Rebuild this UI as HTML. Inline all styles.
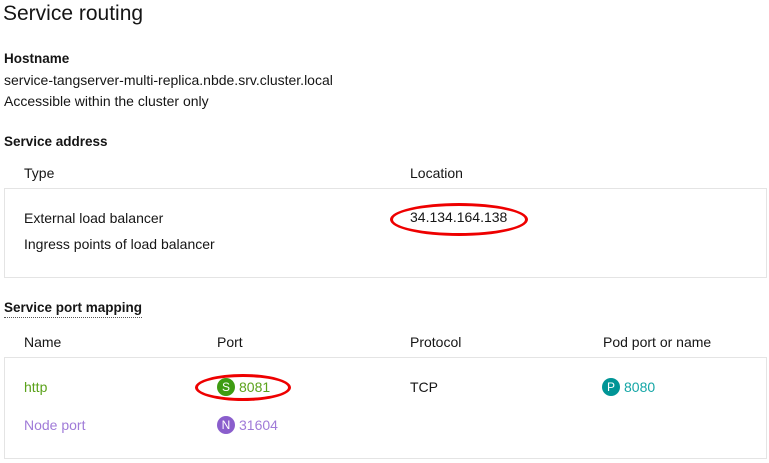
<!DOCTYPE html>
<html><head><style>
body{margin:0;width:769px;height:463px;background:#fff;font-family:"Liberation Sans",sans-serif;color:#151515;position:relative;overflow:hidden}
div,span{position:absolute;white-space:nowrap}
.t{font-size:14px}
.b{font-size:13.5px;font-weight:bold}
.box{border:1px solid #e4e4e4;left:4px;width:761px}
.ic{width:18px;height:18px;border-radius:50%;color:#fff;font-size:12px;text-align:center;line-height:18px}
.ov{border:3px solid #e00;border-radius:50%}
</style></head><body>
<div style="left:3px;top:2px;font-size:21px">Service routing</div>
<div class="b" style="left:4px;top:51px">Hostname</div>
<div class="t" style="left:4px;top:72px">service-tangserver-multi-replica.nbde.srv.cluster.local</div>
<div class="t" style="left:4px;top:93px">Accessible within the cluster only</div>
<div class="b" style="left:4px;top:134px">Service address</div>
<div class="t" style="left:24px;top:165px">Type</div>
<div class="t" style="left:410px;top:165px">Location</div>
<div class="box" style="top:188px;height:88px"></div>
<div class="t" style="left:24px;top:210px">External load balancer</div>
<div class="t" style="left:24px;top:236px">Ingress points of load balancer</div>
<div class="t" style="left:410px;top:209px">34.134.164.138</div>
<div class="ov" style="left:390px;top:203px;width:132px;height:27px"></div>
<div class="b" style="left:4px;top:300px;border-bottom:1px dotted #555;padding-bottom:2px">Service port mapping</div>
<div class="t" style="left:24px;top:334px">Name</div>
<div class="t" style="left:217px;top:334px">Port</div>
<div class="t" style="left:410px;top:334px">Protocol</div>
<div class="t" style="left:603px;top:334px">Pod port or name</div>
<div class="box" style="top:357px;height:100px"></div>
<div class="t" style="left:24px;top:379px;color:#5ba21b">http</div>
<div class="ic" style="left:217px;top:378px;background:#3e9c12">S</div>
<div class="t" style="left:239px;top:379px;color:#5ba21b">8081</div>
<div class="ov" style="left:195px;top:374px;width:90px;height:21px"></div>
<div class="t" style="left:410px;top:379px">TCP</div>
<div class="ic" style="left:602px;top:378px;background:#009596">P</div>
<div class="t" style="left:624px;top:379px;color:#14a6a6">8080</div>
<div class="t" style="left:24px;top:417px;color:#a07bd8">Node port</div>
<div class="ic" style="left:217px;top:416px;background:#8a5ecc">N</div>
<div class="t" style="left:239px;top:417px;color:#a07bd8">31604</div>
</body></html>
